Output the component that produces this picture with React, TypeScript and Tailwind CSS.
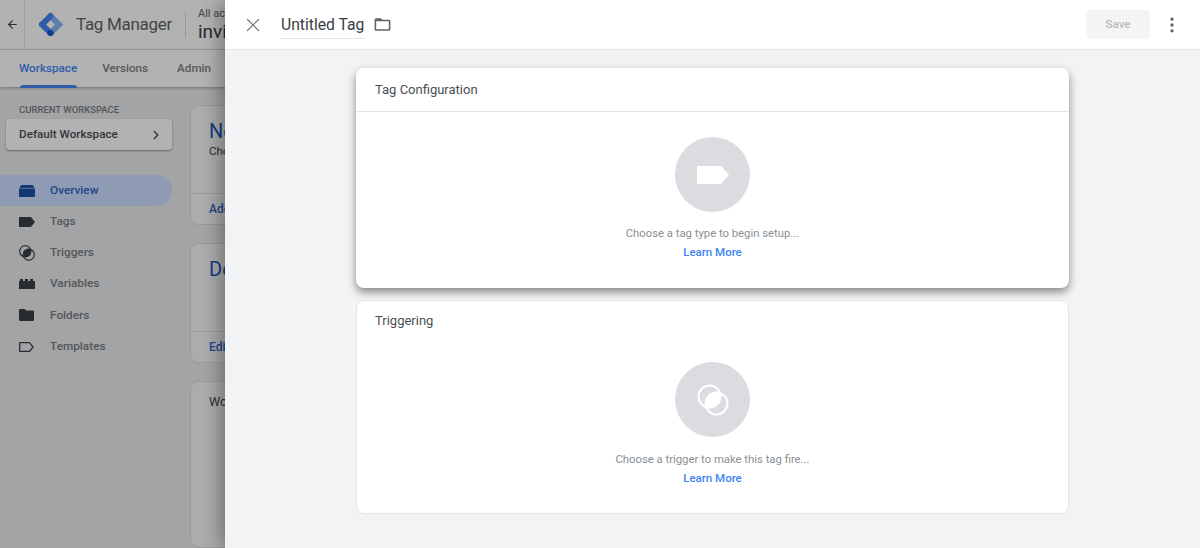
import { ArrowLeft, ChevronRight, MoreVertical, X } from 'lucide-react';
import type { ReactNode } from 'react';

const navItems: { text: string; icon: ReactNode; active?: boolean }[] = [
  {
    text: 'Overview',
    active: true,
    icon: (
      <svg width="16" height="12" viewBox="0 0 16 12">
        <path d="M3.500 0h9A2.500 2.500 0 0 1 15 2l1 2v6.800a1.200 1.200 0 0 1-1.200 1.200H1.200A1.200 1.200 0 0 1 0 10.800V4l1-2A2.500 2.500 0 0 1 3.500 0z" fill="#174ea6" />
        <path d="M0 3.300h16" stroke="#b9c8e2" strokeWidth="0.700" />
      </svg>
    ),
  },
  {
    text: 'Tags',
    icon: (
      <svg width="16" height="10" viewBox="0 0 16 10">
        <path d="M0 0h12l4 5-4 5H0z" fill="#3c4043" />
      </svg>
    ),
  },
  {
    text: 'Triggers',
    icon: (
      <svg width="16" height="16" viewBox="0 0 16 16" fill="none">
        <clipPath id="nav-lens">
          <circle cx="6.300" cy="6.300" r="5.600" />
        </clipPath>
        <circle cx="6.300" cy="6.300" r="5.600" stroke="#3c4043" strokeWidth="1.200" />
        <circle cx="9.700" cy="9.700" r="5.600" stroke="#3c4043" strokeWidth="1.200" />
        <circle cx="9.700" cy="9.700" r="5.600" fill="#3c4043" clipPath="url(#nav-lens)" />
      </svg>
    ),
  },
  {
    text: 'Variables',
    icon: (
      <svg width="16" height="10" viewBox="0 0 16 10">
        <path d="M0 2h1V0h3v2h2V0h3v2h2V0h3v2h2v8H0z" fill="#3c4043" />
      </svg>
    ),
  },
  {
    text: 'Folders',
    icon: (
      <svg width="15" height="12" viewBox="0 0 15 12">
        <path d="M1.200 0h4.600l1.400 1.500h6.600A1.200 1.200 0 0 1 15 2.700v8.100a1.200 1.200 0 0 1-1.200 1.200H1.200A1.200 1.200 0 0 1 0 10.800V1.200A1.200 1.200 0 0 1 1.200 0z" fill="#3c4043" />
      </svg>
    ),
  },
  {
    text: 'Templates',
    icon: (
      <svg width="15" height="10" viewBox="0 0 15 10" fill="none">
        <path d="M.7.700h9.800l3.600 4.300-3.600 4.300H.7z" stroke="#3c4043" strokeWidth="1.300" strokeLinejoin="round" />
      </svg>
    ),
  },
];

function Logo() {
  return (
    <svg width="25" height="25" viewBox="0 0 25 25" fill="none" strokeLinecap="round" strokeWidth="6">
      <path d="M12.500 4 21 12.500 12.500 21" stroke="#8ab4f8" />
      <path d="M12.500 4 4 12.500" stroke="#4285f4" />
      <path d="M4 12.500 12.500 21" stroke="#4285f4" />
      <circle cx="12.500" cy="21" r="3" fill="#1a56c4" stroke="none" />
    </svg>
  );
}

function BackgroundCard({ title, sub, link }: { title: string; sub?: string; link: string }) {
  return (
    <div className="flex h-[120px] w-[120px] shrink-0 flex-col rounded-lg border border-[#dadce0] bg-[#f6f7f8]">
      <div className="flex-1 px-[18px] pt-[13px]">
        <div className="text-[20px] leading-6 text-[#1a56c4]">{title}</div>
        {sub && <div className="text-[11.500px] leading-4 text-[#3c4043]">{sub}</div>}
      </div>
      <div className="flex h-[31px] items-center border-t border-[#dadce0] px-[18px] text-[12px] font-medium text-[#2f66cc]">
        {link}
      </div>
    </div>
  );
}

function EmptyCard({
  title,
  hint,
  icon,
  raised,
}: {
  title: string;
  hint: string;
  icon: ReactNode;
  raised?: boolean;
}) {
  return (
    <section
      className={
        raised
          ? 'h-[220px] rounded-lg bg-white shadow-[0_4px_8px_rgba(0,0,0,0.45)]'
          : 'h-[214px] rounded-lg border border-[#e3e5e8] bg-white'
      }
    >
      <h2
        className={
          raised
            ? 'flex h-[44px] items-center border-b border-[#e3e5e8] px-[19px] text-[13px] text-[#4a4e52]'
            : 'flex h-[40px] items-center px-[18px] text-[13px] text-[#4a4e52]'
        }
      >
        {title}
      </h2>
      <div className={`flex flex-col items-center ${raised ? 'pt-[25px]' : 'pt-[21px]'}`}>
        <div className="flex h-[75px] w-[75px] items-center justify-center rounded-full bg-[#dadce0]">{icon}</div>
        <p className={`text-[11.300px] leading-4 text-[#8a8f94] ${raised ? 'mt-[14px]' : 'mt-[15px]'}`}>{hint}</p>
        <a className="mt-[2px] text-[11.500px] leading-4 font-medium text-[#4285f4]">Learn More</a>
      </div>
    </section>
  );
}

function TagDrawer() {
  return (
    <div className="absolute inset-y-0 right-0 left-[225px] flex flex-col bg-[#f1f3f5] shadow-[-6px_0_16px_rgba(0,0,0,0.3)]">
      <header className="flex h-[50px] shrink-0 items-center border-b border-[#e3e5e8] bg-white">
        <button aria-label="Close" className="ml-[17px] text-[#70757a]">
          <X size={22} strokeWidth={1.300} />
        </button>
        <div className="mt-[2px] ml-[17px] flex h-[27px] items-center border-b border-[#e3e5e8] text-[15.700px] leading-6 text-[#3c4043]">
          Untitled Tag
        </div>
        <svg width="19" height="19" viewBox="0 0 24 24" fill="#5f6368" className="ml-[9px]">
          <path d="M20 6h-8l-2-2H4c-1.100 0-2 .9-2 2v12c0 1.100.9 2 2 2h16c1.100 0 2-.9 2-2V8c0-1.100-.9-2-2-2zm0 12H4V8h16v10z" />
        </svg>
        <button className="ml-auto h-[29px] w-[64px] rounded bg-[#f5f5f6] text-[11.500px] font-medium text-[#b8b9bb]">
          Save
        </button>
        <button aria-label="More" className="mr-[18px] ml-[12px] text-[#5f6368]">
          <MoreVertical size={20} />
        </button>
      </header>
      <main className="flex flex-col gap-3 pt-[18px] pr-[131px] pl-[131px]">
        <EmptyCard
          raised
          title="Tag Configuration"
          hint="Choose a tag type to begin setup..."
          icon={
            <svg width="32" height="18" viewBox="0 0 32 18">
              <path d="M0 0h24l8 9-8 9H0z" fill="#fff" />
            </svg>
          }
        />
        <EmptyCard
          title="Triggering"
          hint="Choose a trigger to make this tag fire..."
          icon={
            <svg width="34" height="34" viewBox="0 0 34 34" fill="none">
              <clipPath id="hint-lens">
                <circle cx="13.500" cy="13.500" r="11" />
              </clipPath>
              <circle cx="13.500" cy="13.500" r="11" stroke="#fff" strokeWidth="2" />
              <circle cx="20.500" cy="20.500" r="11" stroke="#fff" strokeWidth="2" />
              <circle cx="20.500" cy="20.500" r="11" fill="#fff" clipPath="url(#hint-lens)" />
            </svg>
          }
        />
      </main>
    </div>
  );
}

export default function App() {
  return (
    <div className="relative h-[548px] w-[1200px] overflow-hidden bg-[#e9ebee] font-['Roboto',sans-serif]">
      {/* page behind the drawer */}
      <div className="flex h-full flex-col">
        <div className="flex h-[50px] shrink-0 items-center border-b border-[#e0e0e0] bg-white">
          <div className="flex h-full w-[25px] items-center justify-center border-r border-[#e0e0e0] text-[#3c4043]">
            <ArrowLeft size={13} strokeWidth={2} />
          </div>
          <div className="ml-[13px]">
            <Logo />
          </div>
          <span className="ml-[13px] w-[96px] text-[17px] tracking-[-0.3px] whitespace-nowrap text-[#5f6368]">
            Tag Manager
          </span>
          <div className="ml-[13px] h-[26px] w-px bg-[#dadce0]" />
          <div className="ml-[12px] whitespace-nowrap">
            <div className="text-[11px] leading-[14px] text-[#5f6368]">All accounts</div>
            <div className="text-[19px] leading-[22px] text-[#3c4043]">invision</div>
          </div>
        </div>
        <nav className="flex h-[37px] shrink-0 items-center bg-white pl-[19px] text-[11.700px] shadow-[0_1px_3px_rgba(0,0,0,0.3)]">
          <span className="relative font-medium text-[#4285f4]">
            Workspace
            <span className="absolute right-0 -bottom-[11px] left-px h-[3px] rounded-t-[3px] bg-[#4285f4]" />
          </span>
          <span className="ml-[25px] font-medium text-[#7a7e83]">Versions</span>
          <span className="ml-[29px] font-medium text-[#7a7e83]">Admin</span>
        </nav>
        <div className="flex min-h-0 flex-1">
          <aside className="w-[190px] shrink-0 pt-[17px]">
            <div className="pl-[19px] text-[9.500px] leading-3 font-medium text-[#7a7e83]">CURRENT WORKSPACE</div>
            <button className="mt-[3px] ml-[6px] flex h-[31px] w-[166px] items-center justify-between rounded bg-white pr-[9px] pl-[13px] text-[11.700px] font-medium text-[#4a4e52] shadow-[0_1px_2px_rgba(0,0,0,0.4)]">
              Default Workspace
              <ChevronRight size={14} strokeWidth={2.500} />
            </button>
            <ul className="mt-[25px] w-[172px]">
              {navItems.map(({ text, icon, active }) => (
                <li
                  key={text}
                  className={`flex h-[31.200px] items-center rounded-r-full pl-[19px] text-[11.800px] font-medium ${
                    active ? 'bg-[#ccdfff] text-[#2f66cc]' : 'text-[#7a7e83]'
                  }`}
                >
                  <span className="flex w-[31px] items-center">{icon}</span>
                  {text}
                </li>
              ))}
            </ul>
          </aside>
          <div className="flex flex-col gap-[18px] pt-[18px]">
            <BackgroundCard title="New" sub="Choose" link="Add" />
            <BackgroundCard title="Description" link="Edit" />
            <div className="h-[200px] w-[120px] rounded-lg border border-[#dadce0] bg-[#f6f7f8] px-[18px] pt-[11px] text-[12.500px] text-[#3c4043]">
              Workspace
            </div>
          </div>
        </div>
      </div>
      {/* scrim */}
      <div className="absolute inset-0 bg-black/30" />
      <TagDrawer />
    </div>
  );
}
